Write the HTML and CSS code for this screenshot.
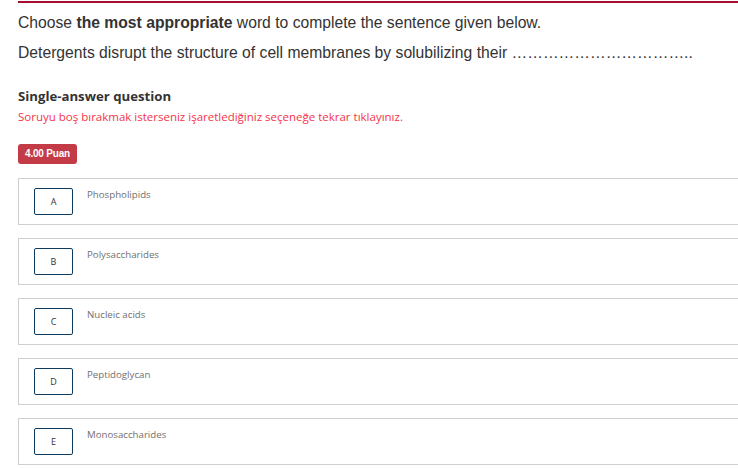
FILE: index.html
```html
<!DOCTYPE html>
<html lang="tr">
<head>
<meta charset="utf-8">
<title>Question</title>
<link rel="stylesheet" href="styles.css">
</head>
<body>
<div class="page">
  <div class="topline"></div>
  <div class="stem">
    <p class="line">Choose <b>the most appropriate</b> word to complete the sentence given below.</p>
    <p class="line">Detergents disrupt the structure of cell membranes by solubilizing their &hellip;&hellip;&hellip;&hellip;&hellip;&hellip;&hellip;&hellip;&hellip;&hellip;&hellip;..</p>
  </div>
  <h3 class="qtype">Single-answer question</h3>
  <p class="hint">Soruyu boş bırakmak isterseniz işaretlediğiniz seçeneğe tekrar tıklayınız.</p>
  <div class="badge">4.00 Puan</div>
  <div class="options">
    <div class="option"><span class="letter">A</span><span class="otext">Phospholipids</span></div>
    <div class="option"><span class="letter">B</span><span class="otext">Polysaccharides</span></div>
    <div class="option"><span class="letter">C</span><span class="otext">Nucleic acids</span></div>
    <div class="option"><span class="letter">D</span><span class="otext">Peptidoglycan</span></div>
    <div class="option"><span class="letter">E</span><span class="otext">Monosaccharides</span></div>
  </div>
</div>
</body>
</html>
```

FILE: styles.css
```css
html, body {
  margin: 0;
  padding: 0;
  background: #fff;
  overflow: hidden;
}
.page {
  padding-left: 18px;
  margin-right: -4px;
  padding-top: 1px;
}
.topline {
  height: 2px;
  background: #a50e30;
}
.stem {
  padding-top: 5px;
}
.line {
  margin: 0;
  font-family: "Liberation Sans", Arial, sans-serif;
  font-size: 15.7px;
  line-height: 30px;
  color: #333;
  white-space: nowrap;
}
.line b {
  font-weight: bold;
}
.qtype {
  margin: 19px 0 0;
  font-family: "Open Sans", "Noto Sans", sans-serif;
  font-size: 13.2px;
  line-height: 18px;
  font-weight: bold;
  color: #333;
}
.hint {
  margin: 5px 0 0;
  font-family: "Open Sans", "Noto Sans", sans-serif;
  font-size: 11.5px;
  line-height: 14px;
  color: #f5344a;
}
.badge {
  margin-top: 20px;
  width: 59px;
  height: 20px;
  box-sizing: border-box;
  background: #c43b48;
  border-radius: 3px;
  color: #fff;
  font-family: "Liberation Sans", Arial, sans-serif;
  font-weight: bold;
  font-size: 10px;
  line-height: 20px;
  text-align: center;
  letter-spacing: -0.2px;
}
.options {
  margin-top: 14px;
  display: flex;
  flex-direction: column;
  gap: 13px;
}
.option {
  height: 47px;
  box-sizing: border-box;
  border: 1px solid #cfcfcf;
  padding: 9px 15px;
  display: flex;
  align-items: flex-start;
}
.letter {
  width: 39px;
  height: 27px;
  box-sizing: border-box;
  border: 1.5px solid #0f3b5e;
  border-radius: 2px;
  display: flex;
  align-items: center;
  justify-content: center;
  font-family: "Open Sans", "Noto Sans", sans-serif;
  font-size: 9px;
  color: #333;
  flex-shrink: 0;
}
.otext {
  margin-left: 14px;
  margin-top: 1px;
  font-family: "Open Sans", "Noto Sans", sans-serif;
  font-size: 9.7px;
  line-height: 12px;
  color: #707070;
}
```
